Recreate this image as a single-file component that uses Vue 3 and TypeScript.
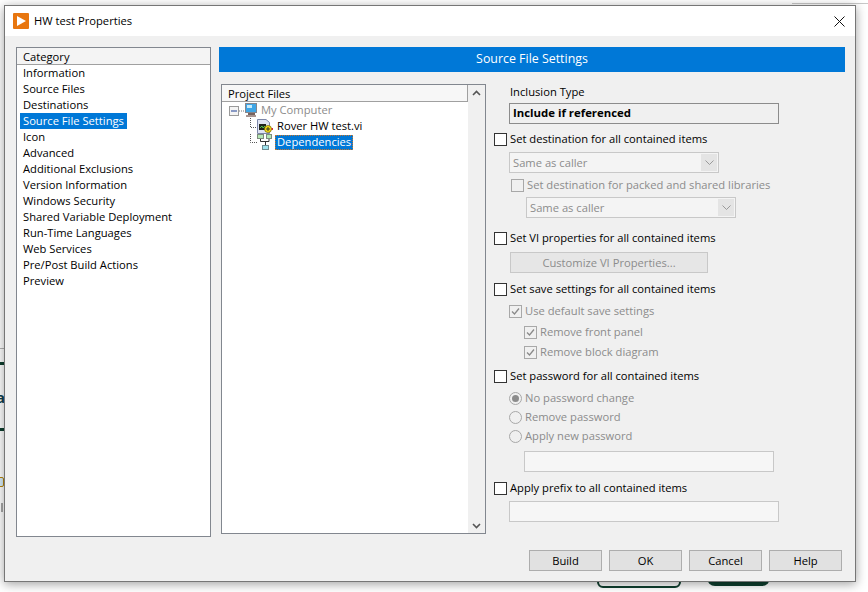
<template>
  <div class="desktop">
    <!-- bits of the main window showing behind the dialog -->
    <div class="behind behind-top"></div>
    <div class="behind behind-left"></div>
    <div class="behind behind-rule rule-a"></div>
    <div class="behind behind-rule rule-b"></div>
    <div class="behind behind-glyph">a</div>
    <div class="behind behind-ring"></div>
    <div class="behind behind-sliver"></div>
    <div class="behind behind-outline"></div>
    <div class="behind behind-solid"></div>

    <div class="dialog">
      <header class="title-bar">
        <svg class="app-logo" width="16" height="16" viewBox="0 0 16 16">
          <rect width="16" height="16" rx="1" fill="#e8760f" />
          <path d="M4 3 L13 8 L4 13 Z" fill="#fff" />
        </svg>
        <span class="title-text">HW test Properties</span>
        <svg class="close-icon" width="11" height="11" viewBox="0 0 11 11">
          <path d="M0.5 0.5 L10.5 10.5 M10.5 0.5 L0.5 10.5" stroke="#111" stroke-width="1" fill="none" />
        </svg>
      </header>

      <div class="dialog-body">
        <div class="main-row">
          <aside class="category-list">
            <div class="list-header">Category</div>
            <div
              v-for="item in categories"
              :key="item"
              class="category-item"
            >
              <span :class="{ selected: item === activeCategory }">{{ item }}</span>
            </div>
          </aside>

          <section class="content">
            <div class="page-header">Source File Settings</div>

            <div class="content-row">
              <div class="tree-box">
                <div class="tree-main">
                  <div class="tree-header">Project Files</div>

                  <div class="tree-row tree-root">
                    <svg width="30" height="16" viewBox="0 0 30 16">
                      <rect x="0.5" y="4.5" width="9" height="9" fill="#f4f4f4" stroke="#9a9a9a" />
                      <path d="M2 9H8" stroke="#1c3f94" />
                      <path d="M10 9H15" stroke="#777" stroke-dasharray="1 1" />
                      <rect x="16" y="1" width="12" height="10" fill="#85858c" />
                      <rect x="17" y="2" width="10" height="8" fill="#3fa6e6" />
                      <rect x="18" y="3" width="5" height="3" fill="#c9ebfb" />
                      <rect x="19" y="11" width="7" height="2" fill="#77635f" />
                      <rect x="17" y="13" width="10" height="2" fill="#a89490" />
                    </svg>
                    <span class="tree-label disabled">My Computer</span>
                  </div>

                  <div class="tree-row tree-child">
                    <svg width="30" height="16" viewBox="0 0 30 16">
                      <path d="M6.5 0V9.5H13" stroke="#555" stroke-dasharray="1 1" fill="none" />
                      <path d="M13.5 1.5H22L25.5 4.5V15.5H13.5Z" fill="#dfe4f2" stroke="#7c86a8" />
                      <rect x="15" y="6" width="7" height="6" fill="#20241c" />
                      <path d="M16 10L18 8L19 10L21 8" stroke="#4fc04a" fill="none" />
                      <circle cx="24" cy="11" r="3.5" fill="#f7e017" stroke="#6d5c00" stroke-width="0.7" />
                      <path d="M22 11H26M24 9V13" stroke="#222" stroke-width="0.9" />
                      <rect x="27.5" y="10" width="1.5" height="2" fill="#d1352b" />
                    </svg>
                    <span class="tree-label">Rover HW test.vi</span>
                  </div>

                  <div class="tree-row tree-child">
                    <svg width="30" height="16" viewBox="0 0 30 16">
                      <path d="M6.5 0V8.5H13" stroke="#555" stroke-dasharray="1 1" fill="none" />
                      <rect x="13.5" y="0.5" width="6" height="4" fill="#b5e8b5" stroke="#7d8c7d" />
                      <rect x="22.5" y="0.5" width="5" height="4" fill="#b5e8b5" stroke="#7d8c7d" />
                      <path d="M16.5 5V7.5H25V5M21.5 7.5V11" stroke="#333" fill="none" />
                      <rect x="18.5" y="11.5" width="6" height="4" fill="#9fe3ee" stroke="#6f8c91" />
                    </svg>
                    <span class="tree-label tree-selected">Dependencies</span>
                  </div>
                </div>

                <div class="tree-scroll">
                  <svg width="9" height="6" viewBox="0 0 9 6">
                    <path d="M1 5L4.5 1.5L8 5" stroke="#555" stroke-width="1.6" fill="none" />
                  </svg>
                  <svg width="9" height="6" viewBox="0 0 9 6">
                    <path d="M1 1L4.5 4.5L8 1" stroke="#555" stroke-width="1.6" fill="none" />
                  </svg>
                </div>
              </div>

              <div class="settings">
                <div class="inclusion-label">Inclusion Type</div>
                <div class="inclusion-field">Include if referenced</div>

                <label class="check-row top-a"><span class="box"></span>Set destination for all contained items</label>
                <div class="select select-a">
                  <span>Same as caller</span>
                  <span class="select-btn">
                    <svg width="9" height="5" viewBox="0 0 9 5"><path d="M0.5 0.5L4.5 4.5L8.5 0.5" stroke="#999" fill="none" /></svg>
                  </span>
                </div>
                <label class="check-row sub-dest disabled"><span class="box box-off"></span>Set destination for packed and shared libraries</label>
                <div class="select select-b">
                  <span>Same as caller</span>
                  <span class="select-btn">
                    <svg width="9" height="5" viewBox="0 0 9 5"><path d="M0.5 0.5L4.5 4.5L8.5 0.5" stroke="#999" fill="none" /></svg>
                  </span>
                </div>

                <label class="check-row top-vi"><span class="box"></span>Set VI properties for all contained items</label>
                <button class="customize-btn" disabled>Customize VI Properties...</button>

                <label class="check-row top-save"><span class="box"></span>Set save settings for all contained items</label>
                <label class="check-row disabled save-default">
                  <span class="box box-off">
                    <svg width="11" height="11" viewBox="0 0 11 11"><path d="M2 5.5L4.5 8L9 2.5" stroke="#8a8a8a" stroke-width="1.3" fill="none" /></svg>
                  </span>
                  Use default save settings
                </label>
                <label class="check-row disabled save-front">
                  <span class="box box-off">
                    <svg width="11" height="11" viewBox="0 0 11 11"><path d="M2 5.5L4.5 8L9 2.5" stroke="#8a8a8a" stroke-width="1.3" fill="none" /></svg>
                  </span>
                  Remove front panel
                </label>
                <label class="check-row disabled save-block">
                  <span class="box box-off">
                    <svg width="11" height="11" viewBox="0 0 11 11"><path d="M2 5.5L4.5 8L9 2.5" stroke="#8a8a8a" stroke-width="1.3" fill="none" /></svg>
                  </span>
                  Remove block diagram
                </label>

                <label class="check-row top-save"><span class="box"></span>Set password for all contained items</label>
                <label
                  v-for="(option, index) in passwordOptions"
                  :key="option"
                  class="check-row disabled radio-row"
                  :class="{ 'radio-first': index === 0 }"
                >
                  <span class="radio"><span v-if="index === 0" class="radio-dot"></span></span>
                  {{ option }}
                </label>
                <div class="text-input input-password"></div>

                <label class="check-row top-save"><span class="box"></span>Apply prefix to all contained items</label>
                <div class="text-input input-prefix"></div>
              </div>
            </div>
          </section>
        </div>

        <footer class="button-row">
          <button v-for="label in buttons" :key="label" class="dlg-btn">{{ label }}</button>
        </footer>
      </div>
    </div>
  </div>
</template>

<script setup lang="ts">
const activeCategory = 'Source File Settings';

const categories: string[] = [
  'Information',
  'Source Files',
  'Destinations',
  'Source File Settings',
  'Icon',
  'Advanced',
  'Additional Exclusions',
  'Version Information',
  'Windows Security',
  'Shared Variable Deployment',
  'Run-Time Languages',
  'Web Services',
  'Pre/Post Build Actions',
  'Preview',
];

const passwordOptions: string[] = ['No password change', 'Remove password', 'Apply new password'];

const buttons: string[] = ['Build', 'OK', 'Cancel', 'Help'];
</script>

<style>
html,
body {
  margin: 0;
  background: #fff;
}
</style>

<style scoped>
.desktop {
  position: relative;
  width: 868px;
  height: 592px;
  overflow: hidden;
  background: #fff;
  font-family: "Open Sans", "Noto Sans", sans-serif;
  font-size: 11.2px;
  color: #000;
}

.behind {
  position: absolute;
}

.behind-top {
  left: 792px;
  top: 3px;
  width: 76px;
  height: 1px;
  background: #c8c8c8;
}

.behind-left {
  left: 0;
  top: 348px;
  width: 4px;
  height: 1px;
  background: #b4b4b4;
}

.behind-rule {
  left: 0;
  width: 4px;
  height: 3px;
  background: #0e3f2e;
}

.rule-a {
  top: 362px;
}

.rule-b {
  top: 428px;
}

.behind-glyph {
  left: -4px;
  top: 387px;
  font-size: 15px;
  line-height: 20px;
  font-weight: 700;
  color: #0e3f4e;
}

.behind-ring {
  left: -6px;
  top: 477px;
  width: 8px;
  height: 8px;
  border: 1px solid #b8860b;
  border-radius: 2px;
  background: #d6ecf8;
}

.behind-sliver {
  left: 1px;
  top: 503px;
  width: 2px;
  height: 9px;
  background: #a8a8a8;
}

.behind-outline {
  left: 597px;
  top: 576px;
  width: 80px;
  height: 8px;
  border: 2px solid #0e3f2e;
  border-radius: 0 0 6px 6px;
}

.behind-solid {
  left: 707px;
  top: 576px;
  width: 63px;
  height: 10px;
  background: #0e3f2e;
  border-radius: 0 0 8px 8px;
}

.dialog {
  position: absolute;
  left: 4px;
  top: 5px;
  width: 850px;
  height: 575px;
  border: 1px solid #767676;
  background: #f0f0f0;
  box-shadow: 0 2px 10px rgba(0, 0, 0, 0.38);
  display: flex;
  flex-direction: column;
}

.title-bar {
  height: 30px;
  background: #fff;
  display: flex;
  align-items: center;
  padding: 0 10px 0 8px;
  flex-shrink: 0;
}

.app-logo {
  margin-right: 5px;
}

.title-text {
  flex: 1;
  padding-bottom: 1px;
}

.dialog-body {
  flex: 1;
  display: flex;
  flex-direction: column;
  padding: 11px 10px 10px 11px;
}

.main-row {
  display: flex;
  gap: 8px;
}

.category-list {
  width: 193px;
  height: 488px;
  border: 1px solid #82878f;
  background: #fff;
  flex-shrink: 0;
}

.list-header {
  height: 16px;
  line-height: 17px;
  padding-left: 6px;
  border-bottom: 1px solid #a0a0a0;
  background: #f4f4f4;
}

.category-item {
  height: 16px;
  line-height: 16px;
  padding-left: 3px;
}

.category-item span {
  display: inline-block;
  padding: 0 3px;
}

.category-item .selected {
  background: #0078d7;
  color: #fff;
}

.content {
  flex: 1;
}

.page-header {
  height: 25px;
  line-height: 23px;
  background: #0078d7;
  color: #fff;
  text-align: center;
  font-size: 12.4px;
}

.content-row {
  display: flex;
  margin-top: 12px;
  padding-left: 2px;
}

.tree-box {
  width: 263px;
  height: 448px;
  border: 1px solid #82878f;
  background: #fff;
  display: flex;
  flex-shrink: 0;
}

.tree-main {
  flex: 1;
}

.tree-header {
  height: 16px;
  line-height: 17px;
  padding-left: 6px;
  background: #f7f7f7;
  border-bottom: 1px solid #a0a0a0;
  border-right: 1px solid #a0a0a0;
}

.tree-row {
  height: 16px;
  display: flex;
  align-items: center;
}

.tree-root {
  padding-left: 7px;
}

.tree-root .tree-label {
  margin-left: 2px;
}

.tree-child {
  padding-left: 22px;
}

.tree-child .tree-label {
  margin-left: 3px;
}

.tree-label {
  line-height: 15px;
  padding-bottom: 1px;
}

.tree-selected {
  background: #0078d7;
  color: #fff;
  outline: 1px dotted #c9762a;
  outline-offset: -1px;
  padding: 0 2px 1px;
  line-height: 14px;
  margin-left: 1px !important;
}

.tree-scroll {
  width: 17px;
  background: #f0f0f0;
  display: flex;
  flex-direction: column;
  justify-content: space-between;
  align-items: center;
  padding: 5px 0 4px;
  box-sizing: border-box;
}

.settings {
  width: 290px;
  padding-left: 8px;
}

.disabled {
  color: #8c8c8c;
}

.inclusion-label {
  height: 16px;
  line-height: 15px;
  margin-left: 16px;
}

.inclusion-field {
  margin: 3px 0 0 15px;
  width: 265px;
  height: 19px;
  line-height: 18px;
  border: 1px solid #8c8c8c;
  padding-left: 3px;
  font-weight: 700;
  font-size: 11.4px;
}

.check-row {
  display: flex;
  align-items: center;
  height: 16px;
  line-height: 16px;
  white-space: nowrap;
}

.box {
  width: 11px;
  height: 11px;
  border: 1px solid #333;
  background: #fff;
  margin-right: 3px;
  flex-shrink: 0;
  display: flex;
}

.box-off {
  border-color: #a8a8a8;
  background: #f0f0f0;
}

.radio {
  width: 11px;
  height: 11px;
  border: 1px solid #a8a8a8;
  border-radius: 50%;
  margin-right: 3px;
  flex-shrink: 0;
  display: flex;
  align-items: center;
  justify-content: center;
}

.radio-dot {
  width: 7px;
  height: 7px;
  border-radius: 50%;
  background: #8c8c8c;
}

.top-a {
  margin-top: 7px;
}

.select {
  height: 19px;
  line-height: 19px;
  border: 1px solid #c8c8c8;
  background: #f4f4f4;
  color: #8c8c8c;
  display: flex;
  justify-content: space-between;
  padding-left: 3px;
}

.select-a {
  margin: 5px 0 0 15px;
  width: 205px;
}

.select-b {
  margin: 4px 0 0 32px;
  width: 205px;
}

.select-btn {
  width: 16px;
  height: 17px;
  margin: 1px;
  background: #e4e4e4;
  border: 0;
  display: flex;
  align-items: center;
  justify-content: center;
}

.sub-dest {
  margin: 4px 0 0 17px;
}

.top-vi {
  margin-top: 12px;
}

.customize-btn {
  display: block;
  margin: 6px 0 0 16px;
  width: 198px;
  height: 21px;
  padding: 0;
  font: inherit;
  color: #8c8c8c;
  background: #e6e6e6;
  border: 1px solid #c8c8c8;
}

.top-save {
  margin-top: 8px;
}

.save-default {
  margin: 6px 0 0 15px;
}

.save-front {
  margin: 5px 0 0 30px;
}

.save-block {
  margin: 4px 0 0 30px;
}

.radio-row {
  margin: 3px 0 0 15px;
}

.radio-first {
  margin-top: 6px;
}

.text-input {
  height: 19px;
  border: 1px solid #c8c8c8;
  background: #f6f6f6;
}

.input-password {
  margin: 7px 0 0 30px;
  width: 248px;
}

.input-prefix {
  margin: 5px 0 0 15px;
  width: 268px;
}

.button-row {
  display: flex;
  justify-content: flex-end;
  gap: 7px;
  margin-top: 13px;
  padding-right: 3px;
}

.dlg-btn {
  width: 73px;
  height: 21px;
  padding: 0;
  font: inherit;
  color: #000;
  background: #e1e1e1;
  border: 1px solid #adadad;
}
</style>
